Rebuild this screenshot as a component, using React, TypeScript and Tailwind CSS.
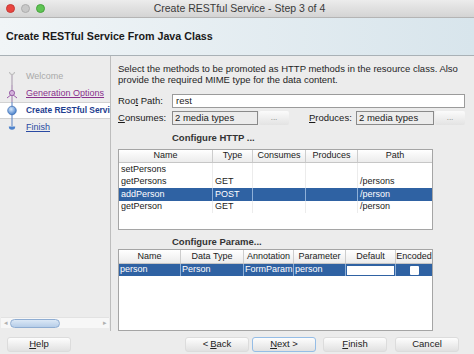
import React from "react";

const navRows = [
  { label: "Welcome", cls: "text-[#a9a9a9] text-[9px]" },
  { label: "Generation Options", cls: "text-[#8a2f8c] underline text-[9px]" },
  { label: "Create RESTful Service", cls: "text-[#1d3d8f] font-bold text-[8.4px]" },
  { label: "Finish", cls: "text-[#2a4aa3] underline text-[9px]" },
];

const httpCols = [
  { name: "Name", w: "w-[94px]" },
  { name: "Type", w: "w-[40px]" },
  { name: "Consumes", w: "w-[53px]" },
  { name: "Produces", w: "w-[52px]" },
  { name: "Path", w: "flex-1" },
];

const httpRows = [
  { cells: ["setPersons", "", "", "", ""], sel: false },
  { cells: ["getPersons", "GET", "", "", "/persons"], sel: false },
  { cells: ["addPerson", "POST", "", "", "/person"], sel: true },
  { cells: ["getPerson", "GET", "", "", "/person"], sel: false },
];

const paramCols = [
  { name: "Name", w: "w-[62px]" },
  { name: "Data Type", w: "w-[63px]" },
  { name: "Annotation", w: "w-[50px]" },
  { name: "Parameter", w: "w-[52px]" },
  { name: "Default", w: "w-[50px]" },
  { name: "Encoded", w: "flex-1" },
];

function NavIcon({ i }: { i: number }) {
  return (
    <svg width="24" height="17" viewBox="0 0 24 17" className="shrink-0">
      <defs>
        <radialGradient id="blueDot" cx="0.4" cy="0.35" r="0.7">
          <stop offset="0" stopColor="#d6e8fb" />
          <stop offset="1" stopColor="#3c77c6" />
        </radialGradient>
      </defs>
      {i === 0 && (
        <>
          <line x1="12" y1="7" x2="12" y2="17" stroke="#a497aa" strokeWidth="1" />
          <path d="M9.5 4 A2.5 2.5 0 0 0 14.5 4" fill="none" stroke="#b5b5b5" strokeWidth="1" />
        </>
      )}
      {i === 1 && (
        <>
          <line x1="12" y1="0" x2="12" y2="17" stroke="#9b7aa6" strokeWidth="1" />
          <path d="M12 9 L7 13 M12 9 L17 13" stroke="#9a5aa8" strokeWidth="1" fill="none" />
          <circle cx="12" cy="8" r="2.6" fill="#d4b3dc" stroke="#8c4b9b" strokeWidth="0.8" />
        </>
      )}
      {i === 2 && (
        <>
          <line x1="12" y1="0" x2="12" y2="17" stroke="#5b83c4" strokeWidth="1" />
          <circle cx="12" cy="8.5" r="4.3" fill="url(#blueDot)" stroke="#3a6bb3" strokeWidth="0.7" />
        </>
      )}
      {i === 3 && (
        <>
          <line x1="12" y1="0" x2="12" y2="7" stroke="#5b83c4" strokeWidth="1" />
          <path d="M8.8 7.5 A3.2 3.2 0 0 0 15.2 7.5 Z" fill="#4c82cc" />
        </>
      )}
    </svg>
  );
}

function Nav() {
  return (
    <div className="w-[111px] shrink-0 border-r border-[#bdbdbd] flex flex-col pt-[12px] overflow-hidden">
      {navRows.map((r, i) => (
        <div
          key={r.label}
          className={`h-[17px] flex items-center whitespace-nowrap ${
            i === 2 ? "bg-white border-y border-[#d2d2d2]" : "border-y border-transparent"
          }`}
        >
          <NavIcon i={i} />
          <span className={`ml-[2px] ${r.cls}`}>{r.label}</span>
        </div>
      ))}
      <div className="mt-auto mb-[3px] h-[11px] mx-[1px] bg-[#f7f7f7] border-t border-[#e2e2e2] flex items-center">
        <span className="text-[7px] text-[#b0b0b0] w-[9px] text-center">◂</span>
        <div className="w-[50px] h-[9px] rounded-full bg-gradient-to-b from-[#dbe8f6] to-[#b6cde8] border border-[#8fadd2]" />
        <span className="ml-auto text-[7px] text-[#b0b0b0] w-[9px] text-center">▸</span>
      </div>
    </div>
  );
}

function Dots() {
  return (
    <div className="w-[30px] h-[14px] ml-[1px] shrink-0 bg-gradient-to-b from-[#fbfbfb] to-[#e3e3e3] rounded-[2px] flex items-center justify-center text-[8px] text-[#777] leading-none">
      ...
    </div>
  );
}

function HeaderCells({ cols, h }: { cols: { name: string; w: string }[]; h: string }) {
  return (
    <div className={`flex ${h} bg-gradient-to-b from-white to-[#ececec] border-b border-[#c6c6c6] shrink-0`}>
      {cols.map((c, i) => (
        <div
          key={c.name}
          className={`${c.w} flex items-center justify-center text-[9px] text-[#222] ${
            i < cols.length - 1 ? "border-r border-[#cdcdcd]" : ""
          }`}
        >
          {c.name}
        </div>
      ))}
    </div>
  );
}

function HttpTable() {
  return (
    <div className="w-[315px] h-[81px] bg-white border border-[#a5a5a5] flex flex-col">
      <HeaderCells cols={httpCols} h="h-[13px]" />
      {httpRows.map((r) => (
        <div
          key={r.cells[0]}
          className={`flex h-[12.5px] ${r.sel ? "bg-[#2f62a3] text-white" : "text-[#1a1a1a]"}`}
        >
          {r.cells.map((c, i) => (
            <div
              key={i}
              className={`${httpCols[i].w} flex items-center px-[2px] text-[9px] ${
                i < r.cells.length - 1
                  ? r.sel
                    ? "border-r border-[#8fb0d8]"
                    : "border-r border-[#ececec]"
                  : ""
              }`}
            >
              {c}
            </div>
          ))}
        </div>
      ))}
    </div>
  );
}

function ParamTable() {
  const cells = ["person", "Person", "FormParam", "person"];
  return (
    <div className="w-[315px] h-[82px] bg-white border border-[#a5a5a5] flex flex-col">
      <HeaderCells cols={paramCols} h="h-[14px]" />
      <div className="flex h-[12px] bg-[#2f62a3] text-white">
        {cells.map((c, i) => (
          <div
            key={i}
            className={`${paramCols[i].w} flex items-center px-[1px] text-[9px] border-r border-[#8fb0d8]`}
          >
            {c}
          </div>
        ))}
        <div className="w-[50px] flex items-center px-[1px] border-r border-[#8fb0d8]">
          <div className="w-full h-[9px] bg-white" />
        </div>
        <div className="flex-1 flex items-center justify-center">
          <div className="w-[9px] h-[9px] bg-white rounded-[1px]" />
        </div>
      </div>
    </div>
  );
}

function Content() {
  return (
    <div className="flex-1 pl-[7px] pr-[9px] pt-[7px] flex flex-col">
      <p className="text-[9.5px] leading-[11px] text-[#1f1f1f]">
        Select the methods to be promoted as HTTP methods in the resource class. Also provide the
        required MIME type for the data content.
      </p>
      <div className="flex items-center mt-[9px] h-[14px]">
        <span className="w-[54px] shrink-0 text-[9.5px]">
          Roo<span className="underline">t</span> Path:
        </span>
        <div className="flex-1 h-[14px] bg-white border border-[#9b9b9b] text-[9.5px] px-[3px] flex items-center">
          rest
        </div>
      </div>
      <div className="flex items-center mt-[3px] h-[14px]">
        <span className="w-[54px] shrink-0 text-[9.5px]">
          <span className="underline">C</span>onsumes:
        </span>
        <div className="w-[86px] shrink-0 h-[14px] bg-[#ececec] border border-[#8a8a8a] text-[9.5px] px-[2px] flex items-center">
          2 media types
        </div>
        <Dots />
        <span className="ml-[20px] w-[47px] shrink-0 text-[9.5px]">
          <span className="underline">P</span>roduces:
        </span>
        <div className="w-[78px] shrink-0 h-[14px] bg-[#ececec] border border-[#8a8a8a] text-[9.5px] px-[2px] flex items-center">
          2 media types
        </div>
        <Dots />
      </div>
      <div className="mt-[7px] ml-[54px] h-[12px] flex items-center text-[9.5px] font-bold text-[#333]">
        Configure HTTP ...
      </div>
      <div className="mt-[5px]">
        <HttpTable />
      </div>
      <div className="mt-[6px] ml-[54px] h-[12px] flex items-center text-[9.5px] font-bold text-[#333]">
        Configure Parame...
      </div>
      <div className="mt-[1px]">
        <ParamTable />
      </div>
    </div>
  );
}

function Btn({ children, focus, className }: { children: React.ReactNode; focus?: boolean; className?: string }) {
  return (
    <div
      className={`w-[64px] h-[15px] rounded-[3px] bg-gradient-to-b from-[#fdfdfd] to-[#e1e1e1] flex items-center justify-center text-[9.5px] text-[#222] border ${
        focus ? "border-[#95bde6]" : "border-[#dcdcdc]"
      } ${className ?? ""}`}
    >
      {children}
    </div>
  );
}

export default function App() {
  return (
    <div className="w-[474px] h-[354px] overflow-hidden bg-[#ececec] flex flex-col font-['Liberation_Sans',Arial,sans-serif] text-[#1a1a1a]">
      <div className="h-[18px] shrink-0 bg-gradient-to-b from-[#ececec] to-[#d4d4d4] border-b border-[#b4b4b4] flex items-center">
        <div className="flex gap-[6px] pl-[6px]">
          <div className="w-[9px] h-[9px] rounded-full bg-[#e9453f] border border-[#c53a36]" />
          <div className="w-[9px] h-[9px] rounded-full bg-[#c8c8c8] border border-[#adadad]" />
          <div className="w-[9px] h-[9px] rounded-full bg-[#5fc454] border border-[#47a33e]" />
        </div>
        <div className="flex-1 text-center text-[10.5px] text-[#3a3a3a] pr-[40px]">
          Create RESTful Service - Step 3 of 4
        </div>
      </div>
      <div className="h-[38px] shrink-0 bg-gradient-to-r from-[#f1f5f7] to-[#d8e5ec] border-b border-[#a9b1b6] flex items-center pl-[6px]">
        <span className="text-[10.7px] font-bold text-[#1a1a1a]">Create RESTful Service From Java Class</span>
      </div>
      <div className="flex h-[275px] shrink-0">
        <Nav />
        <Content />
      </div>
      <div className="flex-1 flex items-start pt-[6px] pl-[7px]">
        <Btn>
          <span className="underline">H</span>elp
        </Btn>
        <Btn className="ml-[114px]">
          &lt; <span className="underline ml-[2px]">B</span>ack
        </Btn>
        <Btn focus className="ml-[3px]">
          <span className="underline">N</span>ext &gt;
        </Btn>
        <Btn className="ml-[7px]">
          <span className="underline">F</span>inish
        </Btn>
        <Btn className="ml-[8px]">Cancel</Btn>
      </div>
    </div>
  );
}
